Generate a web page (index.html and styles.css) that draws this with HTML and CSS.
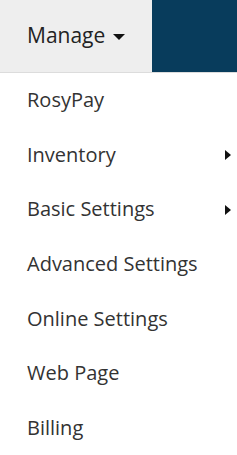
FILE: index.html
```html
<!DOCTYPE html>
<html lang="en">
<head>
  <meta charset="UTF-8">
  <meta name="viewport" content="width=device-width, initial-scale=1.0">
  <title>Manage menu</title>
  <link rel="stylesheet" href="styles.css">
</head>
<body>
  <div class="topbar">
    <div class="manage-toggle">
      <span>Manage</span>
      <span class="caret"></span>
    </div>
    <div class="brand-panel"></div>
  </div>
  <ul class="manage-menu">
    <li class="menu-item">RosyPay</li>
    <li class="menu-item has-sub">Inventory</li>
    <li class="menu-item has-sub">Basic Settings</li>
    <li class="menu-item">Advanced Settings</li>
    <li class="menu-item">Online Settings</li>
    <li class="menu-item">Web Page</li>
    <li class="menu-item">Billing</li>
  </ul>
</body>
</html>
```

FILE: styles.css
```css
/* Reset some default styles */
body, ul, li {
  margin: 0;
  padding: 0;
}

body {
  font-family: "Open Sans", Arial, sans-serif;
  background-color: #fff;
  color: #333;
  width: 237px;
  height: 455px;
  overflow: hidden;
}

.topbar {
  display: flex;
  height: 72px;
  border-bottom: 1px solid #dcdcdc;
}

.manage-toggle {
  width: 152px;
  box-sizing: border-box;
  padding-left: 27px;
  padding-bottom: 3px;
  background-color: #eeeeee;
  display: flex;
  align-items: center;
  font-size: 21px;
  color: #222;
}

.caret {
  width: 0;
  height: 0;
  margin-left: 8px;
  margin-top: 4px;
  border-left: 6px solid transparent;
  border-right: 6px solid transparent;
  border-top: 6px solid #111;
}

.brand-panel {
  flex-grow: 1;
  background-color: #083c5c;
}

.manage-menu {
  list-style: none;
}

.menu-item {
  position: relative;
  padding-left: 27px;
  font-size: 20px;
  line-height: 54.67px;
  color: #333;
}

.menu-item.has-sub::after {
  content: "";
  position: absolute;
  right: 6px;
  top: 50%;
  margin-top: -5px;
  border-top: 5px solid transparent;
  border-bottom: 5px solid transparent;
  border-left: 6px solid #111;
}
```
